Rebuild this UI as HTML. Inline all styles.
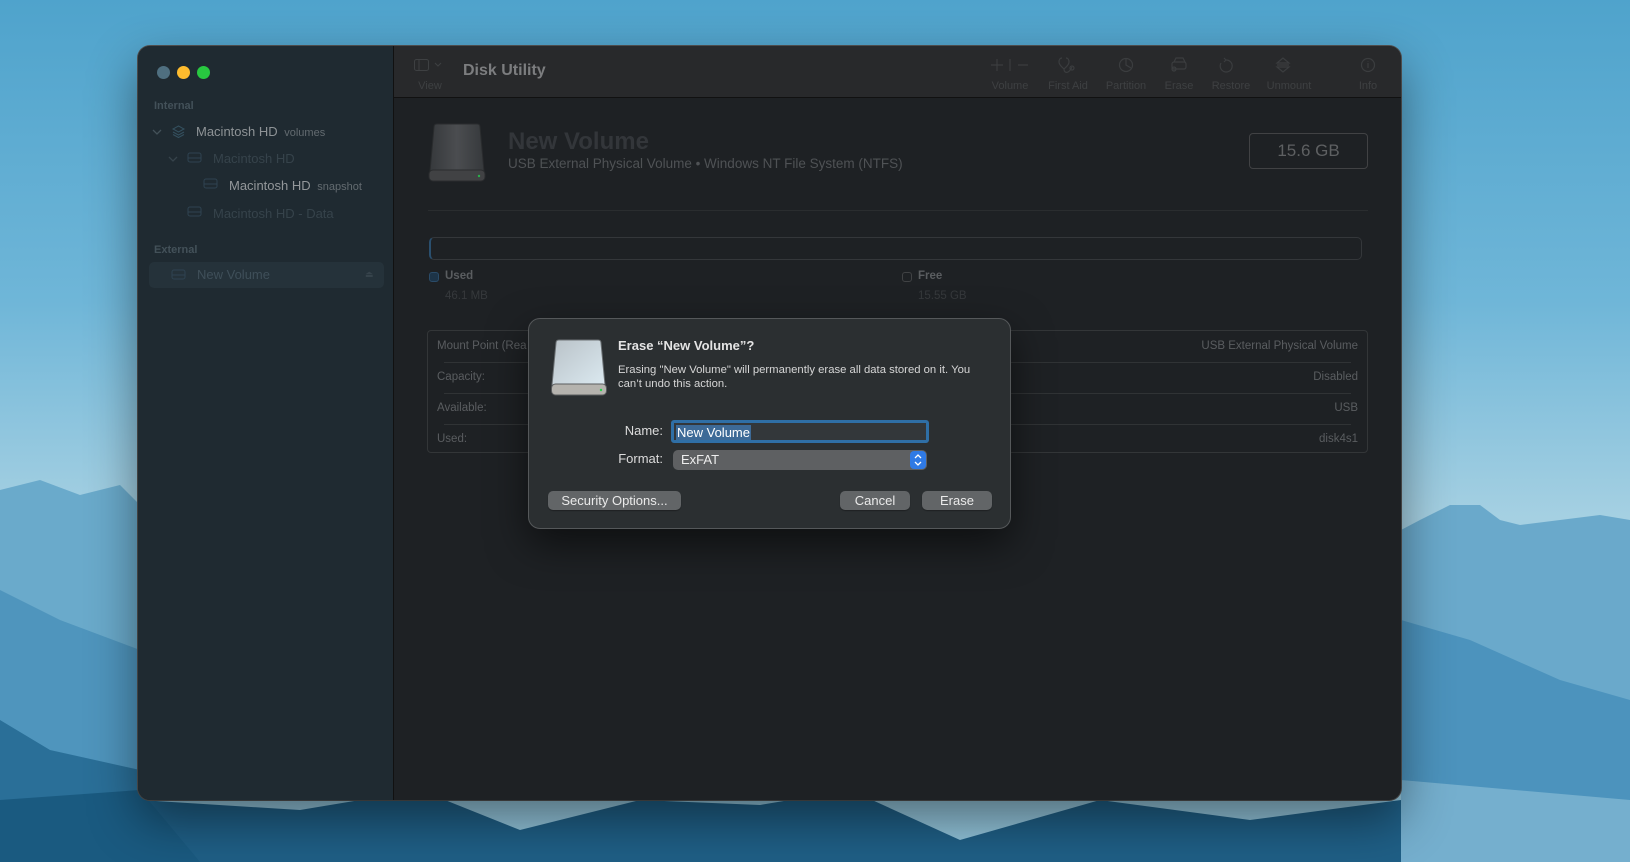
<!DOCTYPE html>
<html><head><meta charset="utf-8"><style>
*{box-sizing:border-box;margin:0;padding:0}
body{width:1630px;height:862px;overflow:hidden;position:relative;font-family:"Liberation Sans",sans-serif;background:linear-gradient(180deg,#4fa3cc 0%,#6fb6d8 35%,#a5d0e2 60%,#8fc2d9 100%)}
.abs{position:absolute}
.win{left:138px;top:46px;width:1263px;height:754px;border-radius:12px;overflow:hidden;background:#1e2124;box-shadow:0 20px 50px rgba(0,0,0,.45),0 0 0 1px #555;}
.side{left:0;top:0;width:256px;height:754px;background:#1f2a31;border-right:1px solid #111}
.tb{left:256px;top:0;right:0;height:52px;background:#28292b;border-bottom:1px solid #111}
.t{position:absolute;white-space:nowrap;line-height:1}
.dot{position:absolute;width:13px;height:13px;border-radius:50%;top:20px}
.lbl{font-size:11px;color:#3e4042;transform:translateX(-50%)}
.row{position:absolute;left:16px;right:16px;height:1px;background:#303335}
.btn{position:absolute;height:19px;background:#626567;border-radius:5px;color:#eaeaea;font-size:13px;text-align:center;line-height:19px;box-shadow:0 1px 1px rgba(0,0,0,.3)}
.tx{font-size:11.5px;color:#5a5d60}
</style></head><body>
<svg class="abs" style="left:0;top:0" width="1630" height="862">
<polygon points="0,490 40,480 80,495 120,485 140,505 140,862 0,862" fill="#6aaacb"/>
<polygon points="0,590 60,620 140,650 140,862 0,862" fill="#4f95bd"/>
<polygon points="0,720 50,750 140,770 140,862 0,862" fill="#2a6f98"/>
<polygon points="1401,530 1420,520 1450,505 1480,505 1500,520 1520,525 1560,520 1600,515 1630,520 1630,862 1401,862" fill="#6aa9cb"/>
<polygon points="1401,620 1470,640 1560,680 1630,700 1630,862 1401,862" fill="#4c93bd"/>
<polygon points="1401,780 1630,800 1630,862 1401,862" fill="#7fb7d2" opacity=".8"/>
<polygon points="140,800 300,810 420,790 520,830 640,800 760,805 850,790 960,840 1100,800 1250,820 1401,800 1401,862 140,862" fill="#1f5f86"/>
<polygon points="0,800 140,790 200,862 0,862" fill="#1a5a80"/>
</svg>
<div class="abs win">
 <div class="abs side">
  <div class="dot" style="left:19px;background:#4f6f80"></div>
  <div class="dot" style="left:39px;background:#febc2e"></div>
  <div class="dot" style="left:59px;background:#28c840"></div>
  <div class="t" style="left:16px;top:55px;font-size:11px;color:#435159;font-weight:bold">Internal</div>
  <svg class="abs" style="left:14px;top:82px" width="10" height="8"><path d="M1 2l4 4 4-4" stroke="#435159" fill="none" stroke-width="1.3"/></svg>
  <svg class="abs" style="left:33px;top:78px" width="15" height="15"><path d="M7.5 2 L13 5 L7.5 8 L2 5Z M2 8 L7.5 11 L13 8 M2 10.5 L7.5 13.5 L13 10.5" stroke="#34505f" fill="none"/></svg>
  <div class="t" style="left:58px;top:79px;font-size:13px;color:#8e9396">Macintosh HD <span style="font-size:11px;color:#636b70;margin-left:3px">volumes</span></div>
  <svg class="abs" style="left:30px;top:109px" width="10" height="8"><path d="M1 2l4 4 4-4" stroke="#36434b" fill="none" stroke-width="1.3"/></svg>
  <svg class="abs" style="left:49px;top:106px" width="15" height="11"><rect x="1" y="1" width="13" height="9" rx="2" stroke="#2f4351" fill="none"/><line x1="1" y1="6" x2="14" y2="6" stroke="#2f4351"/></svg>
  <div class="t" style="left:75px;top:106px;font-size:13px;color:#36434b">Macintosh HD</div>
  <svg class="abs" style="left:65px;top:132px" width="15" height="11"><rect x="1" y="1" width="13" height="9" rx="2" stroke="#2f4351" fill="none"/><line x1="1" y1="6" x2="14" y2="6" stroke="#2f4351"/></svg>
  <div class="t" style="left:91px;top:133px;font-size:13px;color:#93979a">Macintosh HD <span style="font-size:11px;color:#636b70;margin-left:3px">snapshot</span></div>
  <svg class="abs" style="left:49px;top:160px" width="15" height="11"><rect x="1" y="1" width="13" height="9" rx="2" stroke="#2f4351" fill="none"/><line x1="1" y1="6" x2="14" y2="6" stroke="#2f4351"/></svg>
  <div class="t" style="left:75px;top:161px;font-size:13px;color:#36434b">Macintosh HD - Data</div>
  <div class="t" style="left:16px;top:199px;font-size:11px;color:#435159;font-weight:bold">External</div>
  <div class="abs" style="left:11px;top:216px;width:235px;height:26px;border-radius:5px;background:#25323a"></div>
  <svg class="abs" style="left:33px;top:223px" width="15" height="11"><rect x="1" y="1" width="13" height="9" rx="2" stroke="#2f4351" fill="none"/><line x1="1" y1="6" x2="14" y2="6" stroke="#2f4351"/></svg>
  <div class="t" style="left:59px;top:222px;font-size:13px;color:#3f4f59">New Volume</div>
  <div class="t" style="left:227px;top:224px;font-size:9px;color:#36434b">⏏</div>
 </div>
 <div class="abs tb">
  <svg class="abs" style="left:20px;top:13px" width="30" height="12"><rect x="0.5" y="0.5" width="14" height="11" rx="2" stroke="#3e4042" fill="none"/><line x1="5" y1="1" x2="5" y2="11" stroke="#3e4042"/><path d="M21 4l3 3 3-3" stroke="#3e4042" fill="none"/></svg>
  <div class="t lbl" style="left:36px;top:35px">View</div>
  <div class="t" style="left:69px;top:17px;font-size:16px;font-weight:bold;color:#7c7d7f">Disk Utility</div>
 </div>
 <svg class="abs" style="left:0;top:0" width="1263" height="52">
  <g stroke="#3b3d3f" fill="none" stroke-width="1.2">
   <path d="M859 13v12M853 19h12M872 13v12M880 19h10"/>
   <path d="M924 12c-2 0-3 2-3 4 0 3 3 5 5 7 2-2 5-4 5-7 0-2-1-4-3-4M926 23c0 3 2 4 4 3 2-1 3-3 4-5" /><circle cx="934" cy="22" r="2"/>
   <circle cx="988" cy="19" r="6.5"/><path d="M988 12.5v6.5l5 3"/>
   <rect x="1034" y="16" width="14" height="7" rx="2"/><path d="M1036 16l2-4h7l2 4"/><circle cx="1036" cy="23" r="2"/>
   <path d="M1088 14a6 6 0 1 1-5 3M1088 14l-2-2M1088 14l-2 2"/>
   <path d="M1145 12l-6 5h12zM1145 26l-6-5h12zM1139 19h12"/>
   <circle cx="1230" cy="19" r="6.5"/><path d="M1230 17v5M1230 15v0.5"/>
  </g>
 </svg>
 <div class="t lbl" style="left:872px;top:35px">Volume</div>
 <div class="t lbl" style="left:930px;top:35px">First Aid</div>
 <div class="t lbl" style="left:988px;top:35px">Partition</div>
 <div class="t lbl" style="left:1041px;top:35px">Erase</div>
 <div class="t lbl" style="left:1093px;top:35px">Restore</div>
 <div class="t lbl" style="left:1151px;top:35px">Unmount</div>
 <div class="t lbl" style="left:1230px;top:35px">Info</div>
 <svg class="abs" style="left:290px;top:77px" width="60" height="62"><defs><linearGradient id="g1" x1="0" x2="1"><stop offset="0" stop-color="#36393c"/><stop offset=".5" stop-color="#4b4d50"/><stop offset="1" stop-color="#36393c"/></linearGradient></defs><path d="M6 4 Q6 1 9 1 H49 Q52 1 52 4 L56 48 H2Z" fill="url(#g1)" stroke="#2a2c2e"/><rect x="1" y="47" width="56" height="11" rx="4" fill="#414244" stroke="#2a2c2e"/><circle cx="51" cy="53" r="1.2" fill="#2ab04a"/></svg>
 <div class="t" style="left:370px;top:84px;font-size:24px;font-weight:bold;color:#33363a">New Volume</div>
 <div class="t" style="left:370px;top:111px;font-size:13.5px;color:#4f5255">USB External Physical Volume • Windows NT File System (NTFS)</div>
 <div class="abs" style="left:1111px;top:87px;width:119px;height:36px;border:1px solid #414244;border-radius:4px;color:#5e6062;font-size:17px;text-align:center;line-height:34px">15.6 GB</div>
 <div class="abs" style="left:290px;top:164px;width:940px;height:1px;background:#2a2d2f"></div>
 <div class="abs" style="left:291px;top:191px;width:933px;height:23px;border:1px solid #34373a;border-left:2px solid #2a4f6e;border-radius:5px"></div>
 <div class="abs" style="left:291px;top:226px;width:10px;height:10px;border-radius:3px;background:#1d3448;border:1px solid #2a4b68"></div>
 <div class="t" style="left:307px;top:225px;font-size:11.5px;font-weight:bold;color:#5a5d60">Used</div>
 <div class="t" style="left:307px;top:245px;font-size:11.5px;color:#36393c">46.1 MB</div>
 <div class="abs" style="left:764px;top:226px;width:10px;height:10px;border-radius:3px;border:1px solid #404244"></div>
 <div class="t" style="left:780px;top:225px;font-size:11.5px;font-weight:bold;color:#5a5d60">Free</div>
 <div class="t" style="left:780px;top:245px;font-size:11.5px;color:#36393c">15.55 GB</div>
 <div class="abs" style="left:289px;top:284px;width:941px;height:123px;border:1px solid #333638;border-radius:4px">
  <div class="row" style="top:31px"></div><div class="row" style="top:62px"></div><div class="row" style="top:93px"></div>
  <div class="t tx" style="left:9px;top:10px">Mount Point (Rea</div>
  <div class="t tx" style="left:9px;top:41px">Capacity:</div>
  <div class="t tx" style="left:9px;top:72px">Available:</div>
  <div class="t tx" style="left:9px;top:103px">Used:</div>
  <div class="t tx" style="right:9px;top:10px">USB External Physical Volume</div>
  <div class="t tx" style="right:9px;top:41px">Disabled</div>
  <div class="t tx" style="right:9px;top:72px">USB</div>
  <div class="t tx" style="right:9px;top:103px">disk4s1</div>
 </div>
</div>
<div class="abs" style="left:528px;top:318px;width:483px;height:211px;background:#2b2f31;border:1px solid #55585a;border-radius:12px;box-shadow:0 15px 40px rgba(0,0,0,.55)">
 <svg class="abs" style="left:22px;top:20px" width="58" height="60"><defs><linearGradient id="g2" x1="0" x2="1" y1="0" y2="1"><stop offset="0" stop-color="#b9c2c8"/><stop offset="1" stop-color="#dbe9f0"/></linearGradient></defs><path d="M5 4 Q5 1 8 1 H47 Q50 1 50 4 L54 46 H1Z" fill="url(#g2)" stroke="#6d7275"/><rect x="0.5" y="45" width="55" height="11" rx="4" fill="#b5b3ae" stroke="#5a5c5e"/><circle cx="50" cy="51" r="1.2" fill="#2ad04a"/></svg>
 <div class="t" style="left:89px;top:11px;font-size:13px;font-weight:bold;color:#e4e4e4;line-height:32px">Erase “New Volume”?</div>
 <div class="abs" style="left:89px;top:44px;width:370px;font-size:11.3px;line-height:14px;color:#d6d6d6">Erasing "New Volume" will permanently erase all data stored on it. You can’t undo this action.</div>
 <div class="t" style="right:347px;top:105px;font-size:13px;color:#dcdcdc">Name:</div>
 <div class="abs" style="left:142px;top:101px;width:258px;height:23px;border:3px solid #2f6fa6;border-radius:3px;background:#33373a"><span class="t" style="left:2px;top:2px;font-size:13px;color:#fff;background:#3d6a97;padding:1px 1px">New Volume</span></div>
 <div class="t" style="right:347px;top:133px;font-size:13px;color:#dcdcdc">Format:</div>
 <div class="abs" style="left:144px;top:131px;width:254px;height:20px;border-radius:5px;background:#5e6062"><span class="t" style="left:8px;top:3px;font-size:13px;color:#eee">ExFAT</span><div class="abs" style="right:1px;top:1px;width:16px;height:18px;border-radius:4px;background:#2f7ae5"><svg width="16" height="18"><path d="M5 7l3-3 3 3M5 11l3 3 3-3" stroke="#fff" fill="none" stroke-width="1.3"/></svg></div></div>
 <div class="btn" style="left:19px;top:172px;width:133px">Security Options...</div>
 <div class="btn" style="left:311px;top:172px;width:70px">Cancel</div>
 <div class="btn" style="left:393px;top:172px;width:70px">Erase</div>
</div>
</body></html>
